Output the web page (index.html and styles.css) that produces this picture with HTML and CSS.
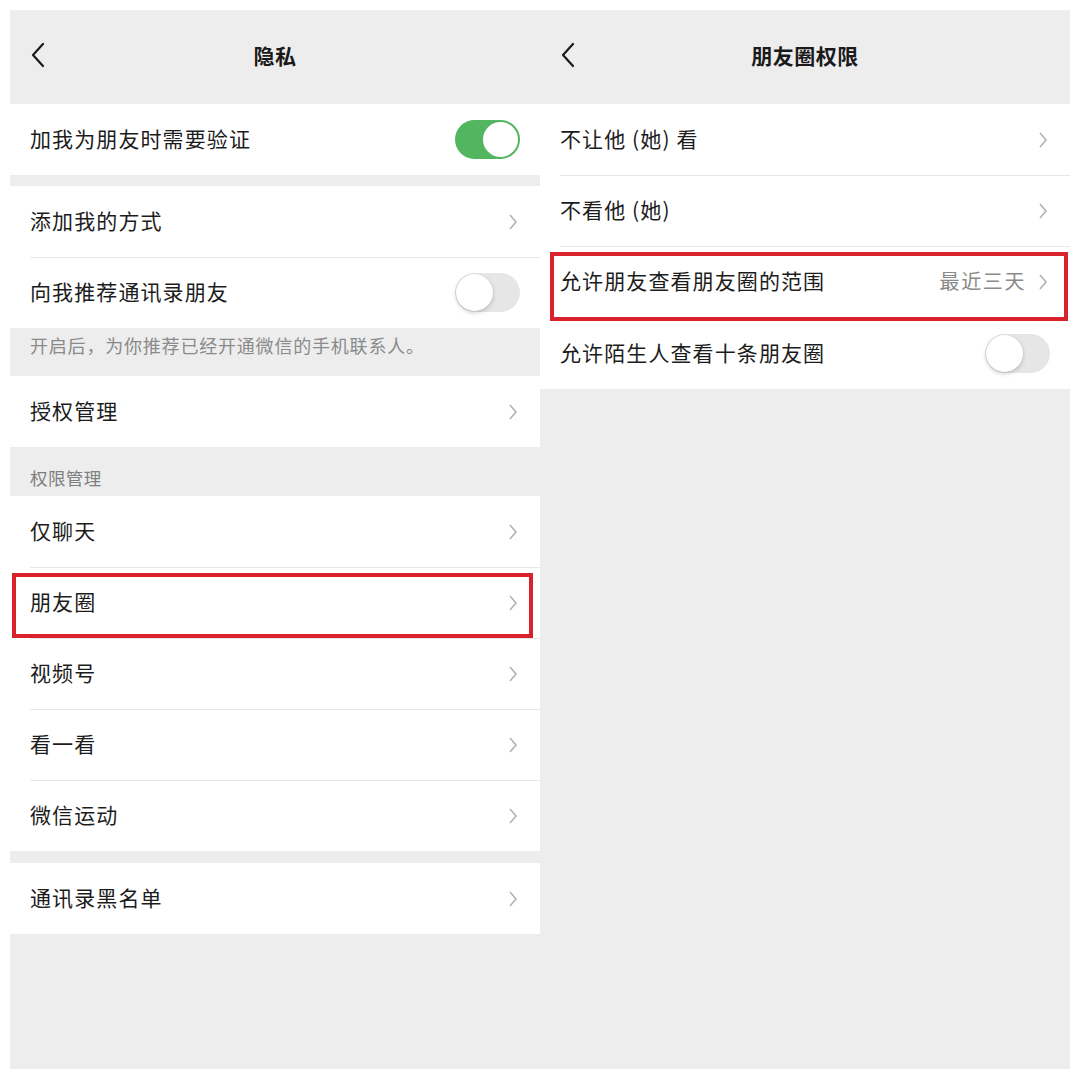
FILE: index.html
```html
<!DOCTYPE html>
<html lang="zh-CN">
<head>
<meta charset="utf-8">
<link rel="stylesheet" href="styles.css">
</head>
<body>
<div class="frame">
  <section class="panel">
    <header class="nav">
      <svg class="back" width="16" height="26" viewBox="0 0 16 26"><polyline points="13,2 3,13 13,24" fill="none" stroke="#1a1a1a" stroke-width="2.2" stroke-linecap="round" stroke-linejoin="round"/></svg>
      <h1 class="title">隐私</h1>
    </header>
    <div class="group">
      <div class="row"><span class="label">加我为朋友时需要验证</span><span class="switch on"><span class="knob"></span></span></div>
    </div>
    <div class="gap"></div>
    <div class="group">
      <div class="row"><span class="label">添加我的方式</span><svg class="chev" width="10" height="18" viewBox="0 0 10 18"><polyline points="2,2 8,9 2,16" fill="none" stroke="#b2b2b2" stroke-width="1.6"/></svg></div>
      <div class="row"><span class="label">向我推荐通讯录朋友</span><span class="switch"><span class="knob"></span></span></div>
    </div>
    <p class="note">开启后，为你推荐已经开通微信的手机联系人。</p>
    <div class="group">
      <div class="row"><span class="label">授权管理</span><svg class="chev" width="10" height="18" viewBox="0 0 10 18"><polyline points="2,2 8,9 2,16" fill="none" stroke="#b2b2b2" stroke-width="1.6"/></svg></div>
    </div>
    <p class="section">权限管理</p>
    <div class="group">
      <div class="row"><span class="label">仅聊天</span><svg class="chev" width="10" height="18" viewBox="0 0 10 18"><polyline points="2,2 8,9 2,16" fill="none" stroke="#b2b2b2" stroke-width="1.6"/></svg></div>
      <div class="row marked"><span class="label">朋友圈</span><svg class="chev" width="10" height="18" viewBox="0 0 10 18"><polyline points="2,2 8,9 2,16" fill="none" stroke="#b2b2b2" stroke-width="1.6"/></svg><span class="box box-left"></span></div>
      <div class="row"><span class="label">视频号</span><svg class="chev" width="10" height="18" viewBox="0 0 10 18"><polyline points="2,2 8,9 2,16" fill="none" stroke="#b2b2b2" stroke-width="1.6"/></svg></div>
      <div class="row"><span class="label">看一看</span><svg class="chev" width="10" height="18" viewBox="0 0 10 18"><polyline points="2,2 8,9 2,16" fill="none" stroke="#b2b2b2" stroke-width="1.6"/></svg></div>
      <div class="row"><span class="label">微信运动</span><svg class="chev" width="10" height="18" viewBox="0 0 10 18"><polyline points="2,2 8,9 2,16" fill="none" stroke="#b2b2b2" stroke-width="1.6"/></svg></div>
    </div>
    <div class="gap gap-lg"></div>
    <div class="group">
      <div class="row"><span class="label">通讯录黑名单</span><svg class="chev" width="10" height="18" viewBox="0 0 10 18"><polyline points="2,2 8,9 2,16" fill="none" stroke="#b2b2b2" stroke-width="1.6"/></svg></div>
    </div>
  </section>

  <section class="panel">
    <header class="nav">
      <svg class="back" width="16" height="26" viewBox="0 0 16 26"><polyline points="13,2 3,13 13,24" fill="none" stroke="#1a1a1a" stroke-width="2.2" stroke-linecap="round" stroke-linejoin="round"/></svg>
      <h1 class="title">朋友圈权限</h1>
    </header>
    <div class="group">
      <div class="row"><span class="label">不让他 (她) 看</span><svg class="chev" width="10" height="18" viewBox="0 0 10 18"><polyline points="2,2 8,9 2,16" fill="none" stroke="#b2b2b2" stroke-width="1.6"/></svg></div>
      <div class="row"><span class="label">不看他 (她)</span><svg class="chev" width="10" height="18" viewBox="0 0 10 18"><polyline points="2,2 8,9 2,16" fill="none" stroke="#b2b2b2" stroke-width="1.6"/></svg></div>
      <div class="row marked"><span class="label">允许朋友查看朋友圈的范围</span><span class="value">最近三天</span><svg class="chev" width="10" height="18" viewBox="0 0 10 18"><polyline points="2,2 8,9 2,16" fill="none" stroke="#b2b2b2" stroke-width="1.6"/></svg><span class="box box-right"></span></div>
      <div class="row row-tall"><span class="label">允许陌生人查看十条朋友圈</span><span class="switch"><span class="knob"></span></span></div>
    </div>
  </section>
</div>
</body>
</html>
```

FILE: styles.css
```css
* { box-sizing: border-box; margin: 0; padding: 0; }

html, body {
  width: 1080px;
  height: 1080px;
  background: #ffffff;
}

body {
  font-family: "Noto Sans CJK SC", "Noto Sans", sans-serif;
  color: #1c1c1c;
}

.frame {
  display: flex;
  padding: 10px 10px 11px 10px;
  height: 1080px;
}

.panel {
  width: 530px;
  height: 100%;
  background: #ededed;
  display: flex;
  flex-direction: column;
}

.nav {
  height: 94px;
  display: flex;
  align-items: center;
  padding-left: 20px;
  position: relative;
}

.back {
  flex: none;
  margin-top: -4px;
}

.title {
  position: absolute;
  left: 0;
  right: 0;
  top: 0;
  line-height: 90px;
  text-align: center;
  font-size: 21px;
  font-weight: 700;
  color: #1a1a1a;
  letter-spacing: 0.5px;
  pointer-events: none;
}

.group {
  background: #ffffff;
}

.row {
  position: relative;
  height: 71px;
  display: flex;
  align-items: center;
  padding: 0 22px 3px 20px;
  font-size: 21px;
}

.row-tall {
  height: 72px;
}

.row + .row {
  background: linear-gradient(#e6e6e6, #e6e6e6) no-repeat 20px 0 / 100% 1px;
}

.label {
  flex: 1;
  letter-spacing: 1.1px;
  color: #1c1c1c;
}

.value {
  font-size: 20px;
  color: #8a8a8a;
  margin-right: 12px;
  letter-spacing: 1.6px;
}

.chev {
  flex: none;
  margin-top: 3px;
}

.gap {
  height: 11px;
}

.gap-lg {
  height: 12px;
}

.note {
  height: 48px;
  padding: 5px 20px 0;
  font-size: 18px;
  color: #8a8a8a;
  line-height: 24px;
  letter-spacing: 0.8px;
}

.section {
  height: 49px;
  padding: 19px 20px 0;
  font-size: 17.5px;
  color: #7f7f7f;
  line-height: 24px;
  letter-spacing: 0.4px;
}

.switch {
  flex: none;
  width: 65px;
  height: 39px;
  border-radius: 20px;
  background: #e6e6e6;
  position: relative;
  margin-right: -2px;
  margin-top: 3px;
}

.switch .knob {
  position: absolute;
  top: 1px;
  left: 1px;
  width: 37px;
  height: 37px;
  border-radius: 50%;
  background: #ffffff;
  box-shadow: 0 2px 4px rgba(0,0,0,0.18), 0 0 0 0.5px rgba(0,0,0,0.06);
}

.switch.on {
  background: #52b55f;
}

.switch.on .knob {
  left: auto;
  right: 2px;
  top: 2px;
  width: 35px;
  height: 35px;
  box-shadow: none;
}

.box {
  position: absolute;
  border: 4px solid #d8232c;
  pointer-events: none;
}

.box-left {
  left: 2px;
  right: 7px;
  top: 6px;
  bottom: 0;
}

.box-right {
  left: 10px;
  right: 2px;
  top: 6px;
  bottom: -4px;
  z-index: 2;
}
```
